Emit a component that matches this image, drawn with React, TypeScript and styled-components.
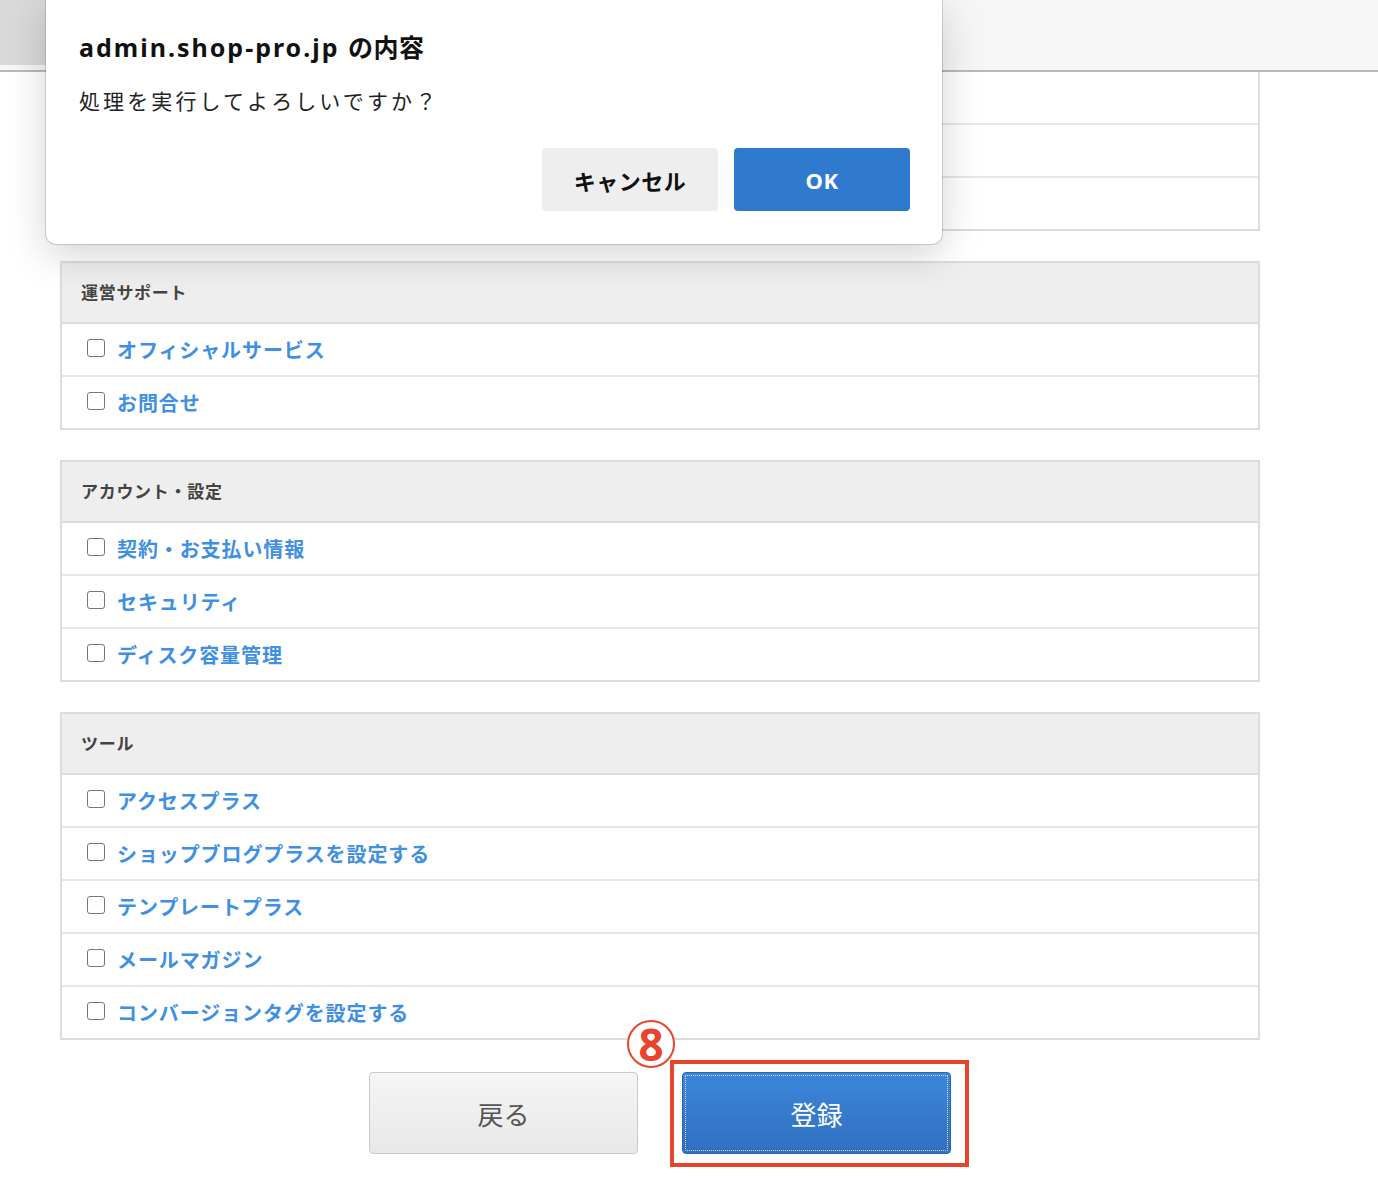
import React from 'react';
import styled, { createGlobalStyle } from 'styled-components';

const GlobalStyle = createGlobalStyle`
	html, body {
		margin: 0;
		padding: 0;
		background: #ffffff;
	}
	body {
		font-family: "Noto Sans CJK JP", "Noto Sans", sans-serif;
		color: #333;
	}
	* { box-sizing: border-box; }
`;

interface SectionData {
	title?: string;
	items: string[];
}

const sections: SectionData[] = [
	{ items: ['', '', ''] },
	{ title: '運営サポート', items: ['オフィシャルサービス', 'お問合せ'] },
	{ title: 'アカウント・設定', items: ['契約・お支払い情報', 'セキュリティ', 'ディスク容量管理'] },
	{
		title: 'ツール',
		items: ['アクセスプラス', 'ショップブログプラスを設定する', 'テンプレートプラス', 'メールマガジン', 'コンバージョンタグを設定する'],
	},
];

const App: React.FC = () => {
	return (
		<Page>
			<GlobalStyle />
			<TopBar>
				<Tab />
			</TopBar>

			<Content>
				{sections.map((s, i) => (
					<Section key={i} open={!s.title}>
						{s.title && <SectionHead>{s.title}</SectionHead>}
						{s.items.map((item, j) => (
							<Row key={j}>
								{item && (
									<>
										<Check />
										<LinkText>{item}</LinkText>
									</>
								)}
							</Row>
						))}
					</Section>
				))}

				<Actions>
					<Button>戻る</Button>
					<Marked>
						<Button primary>登録</Button>
						<RedBox />
						<StepNo>8</StepNo>
					</Marked>
				</Actions>
			</Content>

			<Dialog>
				<DialogTitle>
					admin.shop-pro.jp <Cjk>の内容</Cjk>
				</DialogTitle>
				<DialogMessage>処理を実行してよろしいですか？</DialogMessage>
				<DialogButtons>
					<DialogButton>キャンセル</DialogButton>
					<DialogButton primary>OK</DialogButton>
				</DialogButtons>
			</Dialog>
		</Page>
	);
};

export default App;

const Page = styled.div`
	position: relative;
	width: 1378px;
	height: 1186px;
	overflow: hidden;
	background: #fff;
`;

const TopBar = styled.div`
	height: 72px;
	background: #f6f6f6;
	border-bottom: 2px solid #b9b9b9;
`;

const Tab = styled.div`
	width: 220px;
	height: 65px;
	background: #d9d9d9;
`;

const Content = styled.div`
	width: 1200px;
	margin-left: 60px;
	display: flex;
	flex-direction: column;
	gap: 30px;
`;

const Section = styled.div<{ open?: boolean }>`
	border: 2px solid #dcdcdc;
	border-top: ${({ open }) => (open ? 'none' : '2px solid #dcdcdc')};
	background: #fff;
`;

const SectionHead = styled.div`
	height: 61px;
	background: #eeeeee;
	border-bottom: 2px solid #dcdcdc;
	display: flex;
	align-items: center;
	padding-left: 19px;
	padding-bottom: 3px;
	font-size: 17px;
	font-weight: 700;
	letter-spacing: 0.7px;
	color: #444;
`;

const Row = styled.div`
	height: 51px;
	display: flex;
	align-items: center;
	padding-left: 25px;
	& + & {
		border-top: 2px solid #e6e6e6;
		height: 53px;
	}
`;

const Check = styled.span`
	width: 18px;
	height: 18px;
	border: 1.5px solid #767676;
	border-radius: 3px;
	background: #fff;
	margin-right: 12px;
	flex: none;
	position: relative;
	top: -2px;
`;

const LinkText = styled.span`
	font-size: 20px;
	font-weight: 700;
	letter-spacing: 0.9px;
	color: #3f90e2;
`;

const Actions = styled.div`
	display: flex;
	justify-content: center;
	gap: 44px;
	margin-top: 2px;
`;

const Button = styled.div<{ primary?: boolean }>`
	width: 269px;
	height: 82px;
	border-radius: 4px;
	display: flex;
	align-items: center;
	justify-content: center;
	font-size: 26px;
	border: 1px solid ${({ primary }) => (primary ? '#2c63ad' : '#cacaca')};
	background: ${({ primary }) =>
		primary ? 'linear-gradient(#3b87da, #316fc0)' : 'linear-gradient(#f5f5f5, #e8e8e8)'};
	color: ${({ primary }) => (primary ? '#fff' : '#555')};
	outline: ${({ primary }) => (primary ? '1px dotted rgba(255,255,255,0.75)' : 'none')};
	outline-offset: -4px;
`;

const Marked = styled.div`
	position: relative;
`;

const RedBox = styled.div`
	position: absolute;
	left: -12px;
	right: -18px;
	top: -12px;
	bottom: -13px;
	border: 4px solid #e8442b;
	pointer-events: none;
`;

const StepNo = styled.span`
	position: absolute;
	left: -55px;
	top: -52px;
	width: 48px;
	height: 48px;
	border: 2px solid #e8442b;
	border-radius: 50%;
	display: flex;
	align-items: center;
	justify-content: center;
	font-family: "Noto Sans", "Liberation Sans", sans-serif;
	font-size: 44px;
	font-weight: 700;
	line-height: 1;
	color: #e8442b;
	background: #fff;
`;

const Dialog = styled.div`
	position: absolute;
	left: 46px;
	top: 0;
	width: 896px;
	height: 244px;
	background: #fff;
	border-radius: 0 0 10px 10px;
	box-shadow: 0 0 0 1px rgba(0, 0, 0, 0.14), 0 10px 40px rgba(0, 0, 0, 0.18);
	padding: 28px 32px 33px 33px;
	display: flex;
	flex-direction: column;
`;

const DialogTitle = styled.div`
	font-family: "Noto Sans", "Noto Sans CJK JP", sans-serif;
	font-size: 25px;
	font-weight: 700;
	line-height: 36px;
	letter-spacing: 2px;
	color: #111;
`;

const Cjk = styled.span`
	font-family: "Noto Sans CJK JP", sans-serif;
	letter-spacing: 0.5px;
`;

const DialogMessage = styled.div`
	margin-top: 20px;
	font-size: 21px;
	line-height: 30px;
	letter-spacing: 3.1px;
	color: #222;
`;

const DialogButtons = styled.div`
	margin-top: auto;
	display: flex;
	justify-content: flex-end;
	gap: 16px;
`;

const DialogButton = styled.div<{ primary?: boolean }>`
	width: 176px;
	height: 63px;
	border-radius: 4px;
	display: flex;
	align-items: center;
	justify-content: center;
	font-family: "Noto Sans", "Noto Sans CJK JP", sans-serif;
	font-size: 22px;
	font-weight: 700;
	letter-spacing: 0.5px;
	background: ${({ primary }) => (primary ? '#2f79cf' : '#eeeeee')};
	color: ${({ primary }) => (primary ? '#fff' : '#111')};
`;
